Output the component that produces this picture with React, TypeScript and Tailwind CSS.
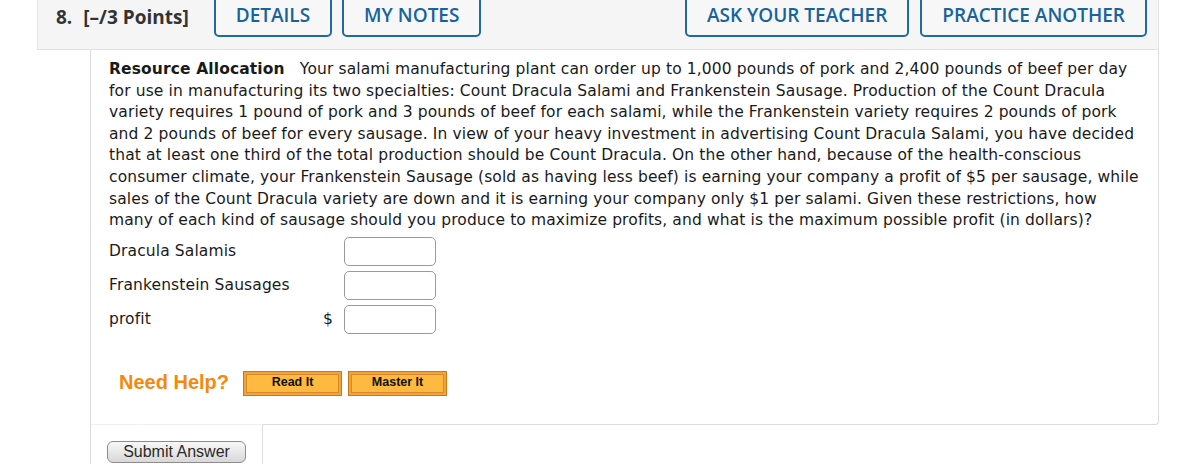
import React from 'react';

// ─── Question Card ────────────────────────────────────────────────────────────
// Header strip with points + action buttons, question body, answer inputs,
// help buttons and submit tab.

const headerBtn =
  'mt-[-8px] h-[45px] px-[20px] flex items-end pb-[6px] rounded-[5px] border-2 border-[#1f6aa0] ' +
  'bg-[#f7f7f7] text-[#17639c] text-[19px] font-semibold uppercase';

const helpBtn =
  'h-[25px] w-[99px] flex items-center justify-center border border-[#c77a17] bg-[#f2a33a] p-[2px]';

function AnswerRow({ label, prefix }: { label: string; prefix?: string }) {
  return (
    <div className="flex h-[34px] items-center">
      <span className="w-[214px]">{label}</span>
      <span className="w-[21px]">{prefix}</span>
      <div className="h-[29px] w-[92px] rounded-[5px] border border-[#9a9a9a] bg-white" />
    </div>
  );
}

export default function App() {
  return (
    <div className="h-[464px] w-[1179px] overflow-hidden bg-white">
      {/* Header */}
      <div
        className="ml-[37px] flex h-[50px] w-[1122px] items-start border-b border-l border-r border-[#e2e2e2] bg-[#f5f5f5] pl-[18px] pr-[11px]"
        style={{ fontFamily: '"Open Sans", "Noto Sans", sans-serif' }}
      >
        <div className="mt-[3px] flex items-center text-[19px] font-bold text-[#333]">
          <span>8.</span>
          <span className="ml-[11px]">[–/3 Points]</span>
        </div>
        <div className="ml-[25px] flex gap-[10px]">
          <div className={headerBtn}>Details</div>
          <div className={headerBtn}>My Notes</div>
        </div>
        <div className="flex-1" />
        <div className="flex gap-[11px]">
          <div className={headerBtn}>Ask Your Teacher</div>
          <div className={headerBtn}>Practice Another</div>
        </div>
      </div>

      {/* Question panel */}
      <div
        className="ml-[90px] w-[1069px] rounded-br-[4px] border-b border-l border-r border-[#dcdcdc] pb-[28px] pl-[18px] pt-[9px] text-[15.5px] leading-[21.6px] text-[#1a1a1a]"
        style={{ fontFamily: '"DejaVu Sans", Verdana, sans-serif' }}
      >
        <p className="tracking-[0.12px]">
          <b>Resource Allocation</b>
          {'\u00a0\u00a0\u00a0'}Your salami manufacturing plant can order up to 1,000 pounds of pork and 2,400 pounds of beef per day
          <br />
          for use in manufacturing its two specialties: Count Dracula Salami and Frankenstein Sausage. Production of the Count Dracula
          <br />
          variety requires 1 pound of pork and 3 pounds of beef for each salami, while the Frankenstein variety requires 2 pounds of pork
          <br />
          and 2 pounds of beef for every sausage. In view of your heavy investment in advertising Count Dracula Salami, you have decided
          <br />
          that at least one third of the total production should be Count Dracula. On the other hand, because of the health-conscious
          <br />
          consumer climate, your Frankenstein Sausage (sold as having less beef) is earning your company a profit of $5 per sausage, while
          <br />
          sales of the Count Dracula variety are down and it is earning your company only $1 per salami. Given these restrictions, how
          <br />
          many of each kind of sausage should you produce to maximize profits, and what is the maximum possible profit (in dollars)?
        </p>

        <div className="mt-[3px] tracking-[0.12px]">
          <AnswerRow label="Dracula Salamis" />
          <AnswerRow label="Frankenstein Sausages" />
          <AnswerRow label="profit" prefix="$" />
        </div>

        {/* Need help */}
        <div
          className="ml-[10px] mt-[34px] flex items-center"
          style={{ fontFamily: '"Liberation Sans", Arial, sans-serif' }}
        >
          <span className="text-[20px] font-bold text-[#f5890c]">Need Help?</span>
          <div className="ml-[14px] flex gap-[6px]">
            <div className={helpBtn}>
              <div className="flex h-full w-full items-center justify-center border border-[#d9892a] bg-[#fdb940] text-[12.5px] font-bold text-[#111]">
                Read It
              </div>
            </div>
            <div className={helpBtn}>
              <div className="flex h-full w-full items-center justify-center border border-[#d9892a] bg-[#fdb940] text-[12.5px] font-bold text-[#111]">
                Master It
              </div>
            </div>
          </div>
        </div>
      </div>

      {/* Submit tab */}
      <div className="relative ml-[90px] mt-[-1px] h-[60px] w-[173px] border-l border-r border-t border-[#dcdcdc] border-t-[#f0f0f0] bg-white pl-[16px] pt-[16px]">
        <div
          className="flex h-[22px] w-[139px] items-center justify-center rounded-[6px] border border-[#8c8c8c] bg-gradient-to-b from-[#f8f8f8] to-[#d8d8d8] text-[16px] text-[#2a2a2a]"
          style={{ fontFamily: '"Liberation Sans", Arial, sans-serif' }}
        >
          Submit Answer
        </div>
      </div>
    </div>
  );
}
